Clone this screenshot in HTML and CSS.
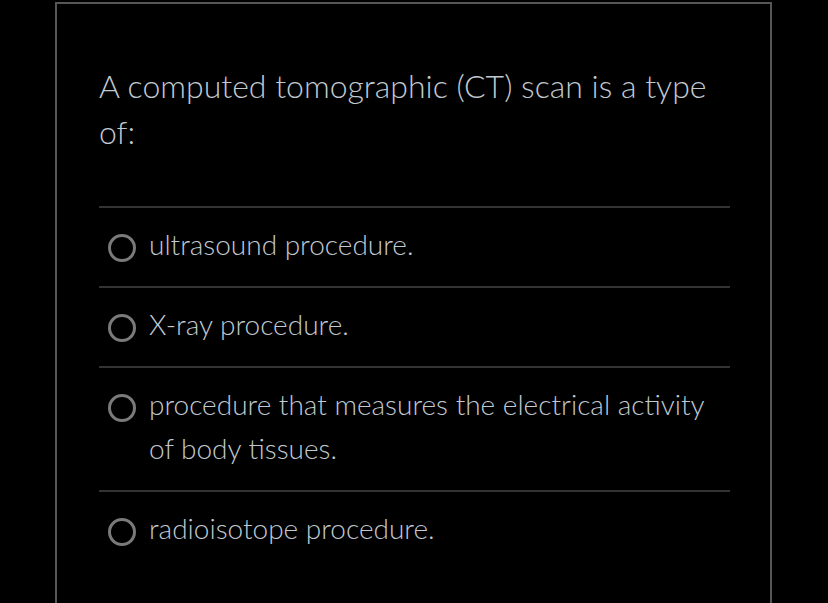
FILE: index.html
```html
<!DOCTYPE html>
<html lang="en">
<head>
<meta charset="utf-8">
<title>Question</title>
<link rel="stylesheet" href="styles.css">
</head>
<body>
<div class="card">
  <p class="question">A computed tomographic (CT) scan is a type of:</p>
  <ul class="options">
    <li class="option"><span class="radio"></span><span class="label">ultrasound procedure.</span></li>
    <li class="option"><span class="radio"></span><span class="label">X-ray procedure.</span></li>
    <li class="option"><span class="radio"></span><span class="label">procedure that measures the electrical activity of body tissues.</span></li>
    <li class="option"><span class="radio"></span><span class="label">radioisotope procedure.</span></li>
  </ul>
</div>
</body>
</html>
```
FILE: styles.css
```css
html, body {
  margin: 0;
  padding: 0;
  background: #000;
  height: 100%;
  overflow: hidden;
}
body {
  font-family: "Lato Light", Lato, "Open Sans", sans-serif;
  font-weight: 300;
  color: #c0c9d1;
}
.card {
  box-sizing: border-box;
  margin: 2px 0 0 55px;
  width: 717px;
  height: 601px;
  overflow: hidden;
  border: 2px solid #565656;
  border-bottom: none;
  padding: 59px 40px 0 42px;
}
.question {
  margin: 0 0 51px 0;
  font-size: 32px;
  line-height: 46px;
}
.options {
  list-style: none;
  margin: 0;
  padding: 0;
}
.option {
  display: flex;
  align-items: flex-start;
  gap: 13px;
  border-top: 2px solid #333;
  padding: 14px 0 20px;
  font-size: 28px;
  line-height: 44px;
}
.radio {
  flex: none;
  box-sizing: border-box;
  width: 28px;
  height: 28px;
  margin: 12px 0 0 9px;
  border: 3px solid #7a7a7a;
  border-radius: 50%;
}
.label {
  flex: 1;
}
```
